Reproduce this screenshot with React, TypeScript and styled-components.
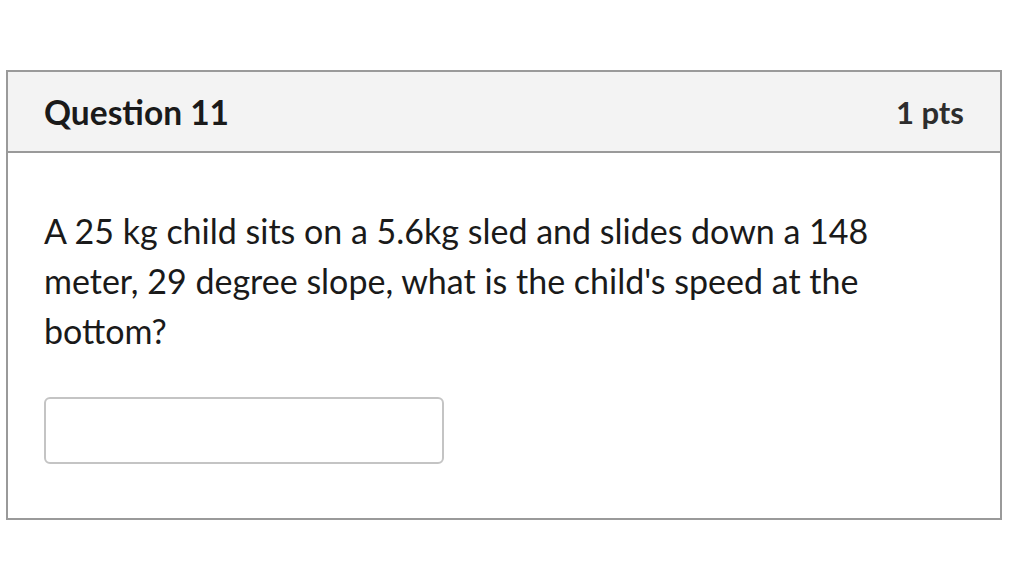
import React from 'react';
import styled, { createGlobalStyle } from 'styled-components';

const GlobalStyle = createGlobalStyle`
  html, body {
    margin: 0;
    padding: 0;
    background: #fff;
    font-family: Lato, "Open Sans", sans-serif;
    color: #1a1a1a;
  }
`;

const Page = styled.div`
  width: 1024px;
  height: 565px;
  padding: 70px 22px 0 6px;
  box-sizing: border-box;
`;

const Card = styled.section`
  border: 2px solid #9a9a9a;
  background: #fff;
`;

const Header = styled.header`
  display: flex;
  align-items: center;
  justify-content: space-between;
  height: 79px;
  padding: 0 36px 0 36px;
  background: #f3f3f3;
  border-bottom: 2px solid #9a9a9a;
`;

const Title = styled.h2`
  margin: 0;
  font-size: 33.5px;
  font-weight: 700;
  color: #1a1a1a;
`;

const Points = styled.span`
  font-size: 31px;
  font-weight: 700;
  color: #2d2d2d;
`;

const Body = styled.div`
  padding: 53px 36px 54px 36px;
`;

const QuestionText = styled.p`
  margin: 0;
  font-size: 34px;
  line-height: 50px;
  max-width: 850px;
  color: #1a1a1a;
`;

const AnswerInput = styled.input`
  display: block;
  margin-top: 41px;
  width: 400px;
  height: 67px;
  box-sizing: border-box;
  border: 2px solid #c4c4c4;
  border-radius: 6px;
  background: #fff;
  font-family: inherit;
  font-size: 24px;
  padding: 0 12px;
  outline: none;
`;

export default function App() {
  return (
    <>
      <GlobalStyle />
      <Page>
        <Card>
          <Header>
            <Title>Question 11</Title>
            <Points>1 pts</Points>
          </Header>
          <Body>
            <QuestionText>
              A 25 kg child sits on a 5.6kg sled and slides down a 148 meter, 29 degree slope, what
              is the child's speed at the bottom?
            </QuestionText>
            <AnswerInput type="text" aria-label="Answer" />
          </Body>
        </Card>
      </Page>
    </>
  );
}
